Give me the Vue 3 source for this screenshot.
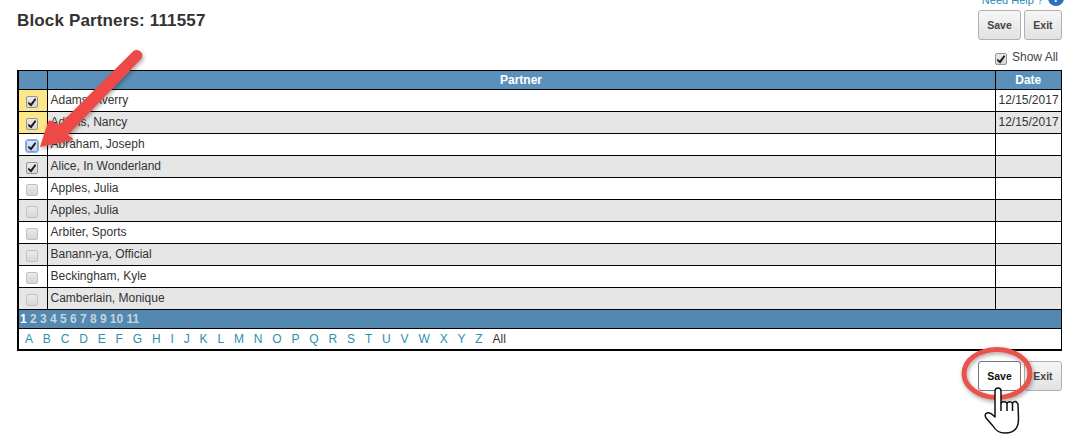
<script setup>
const rows = [
  { name: 'Adams, Averry', date: '12/15/2017', on: true, flag: true },
  { name: 'Adkins, Nancy', date: '12/15/2017', on: true, flag: true },
  { name: 'Abraham, Joseph', date: '', on: true, focus: true },
  { name: 'Alice, In Wonderland', date: '', on: true },
  { name: 'Apples, Julia', date: '' },
  { name: 'Apples, Julia', date: '' },
  { name: 'Arbiter, Sports', date: '' },
  { name: 'Banann-ya, Official', date: '' },
  { name: 'Beckingham, Kyle', date: '' },
  { name: 'Camberlain, Monique', date: '' }
]
const pages = ['1', '2', '3', '4', '5', '6', '7', '8', '9', '10', '11']
const letters = 'ABCDEFGHIJKLMNOPQRSTUVWXYZ'.split('')
</script>

<template>
  <div class="page">
    <header class="top">
      <h1 class="title">Block Partners: 111557</h1>
      <div class="tools">
        <div class="help"><a class="help-link">Need Help ?</a><span class="help-ic">?</span></div>
        <div class="btns">
          <button class="btn save">Save</button>
          <button class="btn exit">Exit</button>
        </div>
      </div>
    </header>

    <div class="showall">
      <span class="cb on low">
        <svg viewBox="0 0 10 10"><path d="M1.200 4.800 L3.800 6.600 L8 1 L9.200 2.600 L4.200 9.600 L1.200 6.900Z" /></svg>
      </span>
      <span>Show All</span>
    </div>

    <div class="grid-box">
      <table class="grid">
        <colgroup>
          <col class="c1" />
          <col class="c2" />
          <col class="c3" />
        </colgroup>
        <thead>
          <tr><th></th><th>Partner</th><th>Date</th></tr>
        </thead>
        <tbody>
          <tr v-for="(r, i) in rows" :key="i" :class="{ alt: i % 2 === 1 }">
            <td class="check" :class="{ flag: r.flag }">
              <span class="cb" :class="{ on: r.on, focus: r.focus }">
                <svg v-if="r.on" viewBox="0 0 10 10"><path d="M1.200 4.800 L3.800 6.600 L8 1 L9.200 2.600 L4.200 9.600 L1.200 6.900Z" /></svg>
              </span>
            </td>
            <td class="name">{{ r.name }}</td>
            <td class="date">{{ r.date }}</td>
          </tr>
        </tbody>
      </table>
      <div class="pager">
        <span v-for="(p, i) in pages" :key="p" class="pg" :class="{ cur: i === 0 }">{{ p }}</span>
      </div>
      <div class="alpha">
        <a v-for="l in letters" :key="l" class="ltr">{{ l }}</a>
        <span class="all">All</span>
      </div>
    </div>

    <div class="foot">
      <button class="btn save active">Save</button>
      <button class="btn exit">Exit</button>
    </div>

    <svg class="overlay" width="1083" height="448" viewBox="0 0 1083 448">
      <defs>
        <filter id="sh" x="-20%" y="-20%" width="140%" height="140%">
          <feDropShadow dx="1" dy="2" stdDeviation="2" flood-color="#000" flood-opacity="0.35" />
        </filter>
      </defs>
      <path filter="url(#sh)" fill="#ec4a47"
        d="M134 50.500 Q138 49 141 52 Q143.500 55 141.500 58.500 L68 135 L72.500 138 Q73.500 140 71.500 140.500 L40 147 L48 122 Q49 119.500 51.500 121 L59 125Z" />
      <ellipse filter="url(#sh)" cx="997" cy="373.500" rx="33" ry="24" fill="none" stroke="#e8524c" stroke-width="5" />
      <path fill="#fff" stroke="#111" stroke-width="1.500" stroke-linejoin="round"
        d="M995 391 Q995 388 998 388 Q1001 388 1001 391 L1001 403 Q1004 400.500 1007 403 Q1010 400.500 1012.500 403 Q1015.500 399.500 1018 404 L1018.500 418 Q1019 433 1005 433 Q997 433 993 426 L986 418 Q984 414 987 413 Q990 412 995 417Z" />
      <path fill="none" stroke="#111" stroke-width="1.500" d="M1001 403 V411 M1007 403 V411 M1012.500 403 V411" />
    </svg>
  </div>
</template>

<style>
html, body { margin: 0; background: #fff; }
</style>

<style scoped>
.page {
  position: relative;
  width: 1083px;
  height: 448px;
  overflow: hidden;
  padding: 0 21px 0 17px;
  box-sizing: border-box;
  font-family: "Liberation Sans", Arial, sans-serif;
  font-size: 12px;
  color: #333;
}
.top { display: flex; justify-content: space-between; align-items: flex-start; height: 40px; }
.title { margin: 12px 0 0; font-size: 17px; line-height: 18px; font-weight: bold; color: #333; letter-spacing: 0.15px; }
.tools { display: flex; flex-direction: column; align-items: flex-end; }
.help { display: flex; align-items: flex-end; gap: 5px; height: 7px; margin-bottom: 3px; margin-right: -2px; align-self: flex-end; }
.help-link { color: #2a8ab5; font-size: 11px; line-height: 14px; }
.help-ic {
  width: 16px; height: 16px; border-radius: 50%; background: #2f6fc0; color: #fff;
  font-size: 12px; font-weight: bold; text-align: center; line-height: 16px; margin-bottom: 1px;
}
.btns, .foot { display: flex; justify-content: flex-end; gap: 3px; }
.btn {
  height: 30px; padding: 0; box-sizing: border-box;
  border: 1px solid #b0b0b0; border-radius: 3px;
  background: linear-gradient(#f6f6f6, #e2e2e2);
  font-family: "Liberation Sans", Arial, sans-serif;
  font-size: 10.5px; font-weight: bold; color: #444;
}
.btn.save { width: 43px; }
.btn.exit { width: 38px; }
.btn.active { background: #fff; border-color: #777; color: #111; }
.showall { display: flex; justify-content: flex-end; align-items: center; gap: 5px; height: 16px; margin-top: 9px; margin-bottom: 5px; margin-right: 4px; color: #444; }
.cb {
  display: block; width: 12px; height: 12px; box-sizing: border-box;
  border: 1px solid #c2c2c2; border-radius: 2px;
  background: linear-gradient(#eaeaea, #d6d6d6);
}
.cb.low { margin-top: 4px; }
.cb svg { display: block; width: 10px; height: 10px; fill: #1c1c1c; }
.cb.on { border-color: #959595; }
.cb.focus { outline: 1px solid #8fb2e6; border-color: #7a9fd8; background: linear-gradient(#dfe8f5, #c4d5ee); }
.grid-box { width: 1045px; box-sizing: border-box; border: 1px solid #000; border-bottom-width: 2px; border-left-width: 2px; }
.grid { width: 100%; border-collapse: collapse; table-layout: fixed; }
.c1 { width: 28px; }
.c3 { width: 66px; }
th {
  height: 18px; padding: 0; background: #5a90b9; color: #fff;
  font-size: 12px; font-weight: bold; text-align: center;
  border-left: 1px solid #000; border-bottom: 1px solid #000;
}
th:first-child, td:first-child { border-left: 0; }
td {
  height: 22px; padding: 0 0 1px 3px; box-sizing: border-box;
  border-left: 1px solid #000; border-bottom: 1px solid #000;
  font-size: 12px; background: #fff; color: #333; white-space: nowrap; overflow: hidden;
}
tr.alt td { background: #e6e6e6; }
td.check { padding: 6px 0 0 7px; vertical-align: top; }
td.check.flag, tr.alt td.check.flag { background: #fce88a; }
.date { padding-left: 3px; }
.pager {
  display: flex; gap: 3.3px; height: 18px; align-items: center; padding-left: 1px;
  background: #5389b1; border-bottom: 1px solid #000; box-sizing: content-box;
  font-size: 12px; font-weight: bold; color: #c9d3da;
}
.pg.cur { color: #fff; }
.alpha { display: flex; align-items: center; height: 20px; padding-left: 6px; gap: 0; color: #2b8fb0; }
.ltr { display: inline-block; margin-right: 9.85px; color: #2b8fb0; }
.all { color: #333; margin-left: 0; }
.foot { margin-top: 10px; }
.overlay { position: absolute; left: 0; top: 0; pointer-events: none; }
</style>
